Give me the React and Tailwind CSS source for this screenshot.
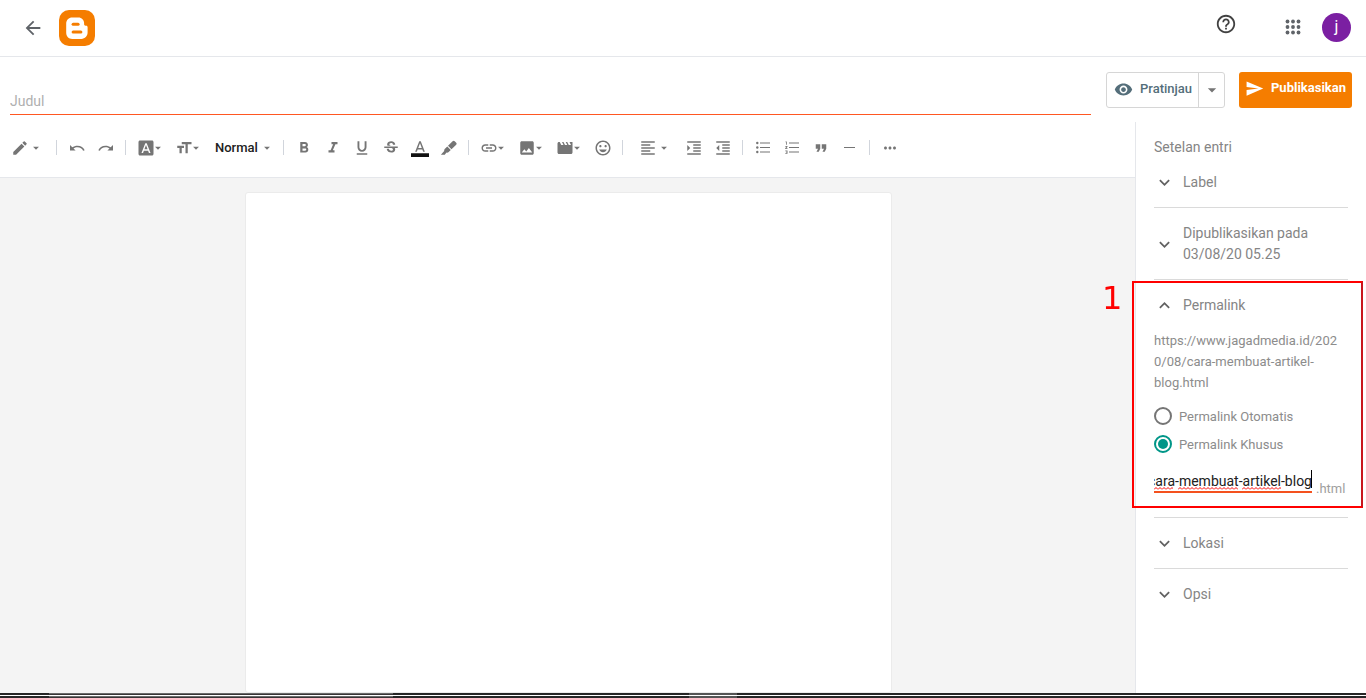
// App.jsx
import React, { useEffect, useRef, useState } from 'react';
import {
  MdArrowBack,
  MdArrowDropDown,
  MdEdit,
  MdExpandLess,
  MdExpandMore,
  MdFontDownload,
  MdFormatAlignLeft,
  MdFormatBold,
  MdFormatIndentDecrease,
  MdFormatIndentIncrease,
  MdFormatItalic,
  MdFormatQuote,
  MdFormatSize,
  MdFormatUnderlined,
  MdHelpOutline,
  MdImage,
  MdLink,
  MdMoreHoriz,
  MdMovie,
  MdOutlineInsertEmoticon,
  MdSend,
  MdStrikethroughS,
  MdVisibility,
} from 'react-icons/md';

const BloggerLogo = () => (
  <svg viewBox="0 0 36 36" className="size-9" aria-hidden="true">
    <rect width="36" height="36" rx="10" fill="#f57d00" />
    <path
      d="M13.200 7.500h6.200c3.300 0 5.700 2.500 5.700 5.600v1c0 1 .6 1.600 1.500 1.600h.6c1 0 1.400.6 1.400 1.500v5.400c0 3.600-2.700 6.300-6.200 6.300h-9.200c-3.500 0-6-2.700-6-6.200V13.500c0-3.400 2.600-6 6-6z"
      fill="#fff"
    />
    <rect x="12.600" y="12.800" width="8" height="3" rx="1.500" fill="#f57d00" />
    <rect x="12.600" y="20.500" width="10.800" height="3" rx="1.500" fill="#f57d00" />
  </svg>
);

const AppsIcon = () => (
  <svg viewBox="0 0 16 16" className="size-4" fill="currentColor" aria-hidden="true">
    {[2.5, 8, 13.5].map((y) => [2.5, 8, 13.5].map((x) => <circle key={`${x}-${y}`} cx={x} cy={y} r="1.900" />))}
  </svg>
);

const UndoIcon = ({ className }) => (
  <svg viewBox="0 0 18 18" className={clsxSize(className)} fill="currentColor" aria-hidden="true">
    <path d="M2 6v5.600h5.600L5.500 9.500C6.600 8.700 8 8.200 9.500 8.200c2.600 0 4.800 1.400 5.600 3.500l1.600-.5C15.700 8.500 12.900 6.700 9.500 6.700c-2 0-3.800.6-5.200 1.600z" />
  </svg>
);

function clsxSize(extra) {
  return extra ? `size-[18px] ${extra}` : 'size-[18px]';
}

const TextColorIcon = () => (
  <svg viewBox="0 0 24 24" className="size-[18px]" fill="currentColor" aria-hidden="true">
    <path d="M11 3L5.500 17h2.250l1.120-3h6.250l1.120 3h2.250L13 3h-2zm-1.380 9L12 5.670 14.380 12H9.620z" />
    <path d="M0 19h24v5H0z" fill="#111" />
  </svg>
);

const MarkerIcon = () => (
  <svg viewBox="0 0 18 18" className="size-[18px]" fill="currentColor" aria-hidden="true">
    <path d="M12.600 2.200a1.500 1.500 0 0 1 2.100 0l1.500 1.500a1.500 1.500 0 0 1 0 2.100l-4.700 4.500-3.500-3.600z" />
    <path d="M7.300 7.400l3.500 3.500-2.400 2.300c-.6.5-1.300.6-2 .3L4.800 15.700H.9l3.300-3.700c-.2-.7 0-1.400.5-1.900z" />
  </svg>
);

const BulletListIcon = () => (
  <svg viewBox="0 0 14 13" className="h-[13px] w-3.5" fill="currentColor" aria-hidden="true">
    <circle cx="1.300" cy="2" r="1.200" />
    <circle cx="1.300" cy="6.500" r="1.200" />
    <circle cx="1.300" cy="11" r="1.200" />
    <path d="M4 1.500h10v1H4zM4 6h10v1H4zM4 10.500h10v1H4z" />
  </svg>
);

const NumberListIcon = () => (
  <svg viewBox="0 0 14 13" className="h-[13px] w-3.5" fill="currentColor" aria-hidden="true">
    <path d="M4 1.500h10v1H4zM4 6h10v1H4zM4 10.500h10v1H4z" />
    <path d="M.5.5h1.300v3.200H1V1.300H.5zM.3 5h2.200v.8L1.300 7.300h1.200v.8H.2v-.8L1.400 5.800H.3zM.3 9.400h2.200v3.300H.3v-.8h1.400v-.4H.9v-.8h.8v-.5H.3z" />
  </svg>
);

const RuleIcon = () => (
  <svg viewBox="0 0 11 1" className="h-px w-[11px]" fill="currentColor" aria-hidden="true">
    <path d="M0 0h11v1H0z" />
  </svg>
);

const Tool = ({ label, children }) => (
  <button type="button" aria-label={label} className="grid h-8 w-[29px] shrink-0 place-items-center">
    {children}
  </button>
);

const DropTool = ({ label, children }) => (
  <button type="button" aria-label={label} className="flex h-8 w-[38px] shrink-0 items-center pl-1.5">
    {children}
    <MdArrowDropDown size={14} className="-ml-1 shrink-0" />
  </button>
);

const WideDropTool = ({ label, children }) => (
  <button type="button" aria-label={label} className="flex h-8 w-[51px] shrink-0 items-center pl-[11px]">
    {children}
    <MdArrowDropDown size={14} className="shrink-0" />
  </button>
);

const Separator = () => <span className="mx-[5px] h-[15px] w-px shrink-0 bg-gray-300" />;

const SectionButton = ({ open, onClick, children }) => (
  <button type="button" aria-expanded={open} onClick={onClick} className="flex w-full items-center gap-2 text-left">
    <span className="grid w-[21px] shrink-0 place-items-center text-[#616161]">
      {open ? <MdExpandLess size={21} /> : <MdExpandMore size={21} />}
    </span>
    <span>{children}</span>
  </button>
);

function Toolbar() {
  return (
    <div className="flex h-14 items-center overflow-hidden border-b border-gray-200 bg-white pb-1 text-[#757575]">
      <WideDropTool label="Tampilan"><MdEdit size={18} /></WideDropTool>
      <Separator />
      <Tool label="Urungkan"><UndoIcon /></Tool>
      <Tool label="Ulangi"><UndoIcon className="-scale-x-100" /></Tool>
      <Separator />
      <DropTool label="Jenis font"><MdFontDownload size={18} /></DropTool>
      <DropTool label="Ukuran font"><MdFormatSize size={18} /></DropTool>
      <button
        type="button"
        className="flex h-8 w-[71px] shrink-0 items-center justify-between pr-1 pl-2 text-[13px] font-medium"
      >
        <span className="text-[#212121]">Normal</span>
        <MdArrowDropDown size={14} />
      </button>
      <Separator />
      <Tool label="Tebal"><MdFormatBold size={18} /></Tool>
      <Tool label="Miring"><MdFormatItalic size={18} /></Tool>
      <Tool label="Garis bawah"><MdFormatUnderlined size={18} /></Tool>
      <Tool label="Coret"><MdStrikethroughS size={18} /></Tool>
      <Tool label="Warna teks"><TextColorIcon /></Tool>
      <Tool label="Warna sorotan"><MarkerIcon /></Tool>
      <Separator />
      <DropTool label="Link"><MdLink size={18} /></DropTool>
      <DropTool label="Gambar"><MdImage size={18} /></DropTool>
      <DropTool label="Video"><MdMovie size={18} /></DropTool>
      <Tool label="Emoji"><MdOutlineInsertEmoticon size={18} /></Tool>
      <Separator />
      <WideDropTool label="Perataan"><MdFormatAlignLeft size={18} /></WideDropTool>
      <Tool label="Tambah indentasi"><MdFormatIndentIncrease size={18} /></Tool>
      <Tool label="Kurangi indentasi"><MdFormatIndentDecrease size={18} /></Tool>
      <Separator />
      <Tool label="Daftar berbutir"><BulletListIcon /></Tool>
      <Tool label="Daftar bernomor"><NumberListIcon /></Tool>
      <Tool label="Kutipan"><MdFormatQuote size={18} /></Tool>
      <Tool label="Garis horizontal"><RuleIcon /></Tool>
      <Separator />
      <Tool label="Lainnya"><MdMoreHoriz size={18} /></Tool>
    </div>
  );
}

// red wavy lines under the words that fail the spell check
const SpellMarks = () => (
  <svg className="pointer-events-none absolute bottom-[3px] left-0 h-[3px] w-full" aria-hidden="true">
    <defs>
      <pattern id="wave" width="4" height="3" patternUnits="userSpaceOnUse">
        <path d="M0 2.500L2 .5l2 2" fill="none" stroke="#f00" strokeWidth="1" />
      </pattern>
    </defs>
    <rect x="0" width="19" height="3" fill="url(#wave)" />
    <rect x="24" width="60" height="3" fill="url(#wave)" />
    <rect x="88" width="39" height="3" fill="url(#wave)" />
  </svg>
);

function PermalinkFields() {
  const [mode, setMode] = useState('khusus');
  const [slug, setSlug] = useState('cara-membuat-artikel-blog');
  const slugRef = useRef(null);

  useEffect(() => {
    // keep the end of the slug in view
    const el = slugRef.current;
    el.focus();
    el.setSelectionRange(el.value.length, el.value.length);
    el.scrollLeft = el.scrollWidth;
  }, []);

  const radioClass =
    'size-[18px] shrink-0 appearance-none rounded-full border-2 border-[#757575] bg-clip-content p-0.5 checked:border-[#009688] checked:bg-[#009688]';

  return (
    <div className="text-[13px] leading-[21px] text-[#8c8c8c]">
      <p className="mt-[14px] pr-2 break-all">
        https://www.jagadmedia.id/2020/08/cara-membuat-artikel-
        <span className="inline-block">blog.html</span>
      </p>
      <div className="mt-[9px]">
        <label className="flex h-7 items-center gap-[7px]">
          <input
            type="radio"
            name="permalink"
            className={radioClass}
            checked={mode === 'otomatis'}
            onChange={() => setMode('otomatis')}
          />
          Permalink Otomatis
        </label>
        <label className="flex h-7 items-center gap-[7px]">
          <input
            type="radio"
            name="permalink"
            className={radioClass}
            checked={mode === 'khusus'}
            onChange={() => setMode('khusus')}
          />
          Permalink Khusus
        </label>
      </div>
      <div className="mt-3 mb-1 flex items-start gap-1">
        <div className="relative min-w-0 flex-1">
          <input
            ref={slugRef}
            aria-label="Permalink khusus"
            spellCheck={false}
            value={slug}
            onChange={(e) => setSlug(e.target.value)}
            className="block h-[23px] w-full border-b-2 border-[#f4511e] text-[14px] text-[#212121] caret-transparent outline-none"
          />
          <SpellMarks />
          <span className="absolute top-0 right-0 h-[18px] w-px bg-black" />
        </div>
        <span className="mt-2 w-8 shrink-0 text-[#9e9e9e]">.html</span>
      </div>
    </div>
  );
}

function SettingsPanel() {
  const [open, setOpen] = useState(true);

  return (
    <aside className="w-[231px] shrink-0 border-l border-gray-200 bg-white px-[18px] pt-[15px] text-[14px] leading-[21px] text-[#858585]">
      <h2>Setelan entri</h2>
      <div className="py-[14px]">
        <SectionButton>Label</SectionButton>
      </div>
      <div className="border-t border-[#dadada] pt-[15px] pb-[14px]">
        <SectionButton>
          Dipublikasikan pada
          <br />
          03/08/20 05.25
        </SectionButton>
      </div>
      <div className="relative border-t border-[#dadada] pt-[15px] pb-[14px]">
        <SectionButton open={open} onClick={() => setOpen(!open)}>Permalink</SectionButton>
        {open && <PermalinkFields />}
        {/* callout */}
        <div className="pointer-events-none absolute top-px -right-[15px] bottom-[9px] -left-[22px] border-2 border-[#f00] border-r-[#c8141c]" />
        <span className="absolute top-0 -left-[52px] font-['DejaVu_Sans',sans-serif] text-[32px] leading-9 text-[#f00]">
          1
        </span>
      </div>
      <div className="border-t border-[#dadada] pt-[15px] pb-[14px]">
        <SectionButton>Lokasi</SectionButton>
      </div>
      <div className="border-t border-[#dadada] pt-[15px] pb-[14px]">
        <SectionButton>Opsi</SectionButton>
      </div>
    </aside>
  );
}

const TaskbarStrip = () => (
  <div className="flex h-0.5 bg-[#262626]">
    <span className="ml-[49px] w-[344px] border-t border-[#6b6b6b] bg-[#383536]" />
    <span className="ml-[296px] w-12 bg-[#555]" />
  </div>
);

export default function App() {
  const [title, setTitle] = useState('');

  return (
    <div className="flex min-h-screen flex-col bg-white font-[Roboto,sans-serif]">
      <header className="flex h-[57px] items-center justify-between border-b border-gray-200 pr-[15px] pl-[22px]">
        <div className="flex items-center gap-[15px]">
          <button type="button" aria-label="Kembali" className="text-[#5f6368]">
            <MdArrowBack size={22} />
          </button>
          <a href="#" aria-label="Blogger">
            <BloggerLogo />
          </a>
        </div>
        <div className="flex h-[54px] items-center self-start">
          <button type="button" aria-label="Bantuan" className="h-12 self-start text-[#424242]">
            <MdHelpOutline size={22} />
          </button>
          <button type="button" aria-label="Aplikasi Google" className="ml-12 text-[#5f6368]">
            <AppsIcon />
          </button>
          <button
            type="button"
            aria-label="Akun"
            className="ml-[21px] size-[29px] rounded-full bg-[#7b1fa2] text-[16px] leading-7 text-white"
          >
            j
          </button>
        </div>
      </header>

      <div className="flex h-[65px] items-start pt-[15px] pr-[14px] pb-[7px] pl-[10px]">
        <input
          aria-label="Judul"
          placeholder="Judul"
          value={title}
          onChange={(e) => setTitle(e.target.value)}
          className="mr-[15px] h-7 min-w-0 flex-1 self-end border-b border-[#ff5722] text-[14px] outline-none placeholder:text-[#b0b0b0]"
        />
        <div className="mr-[14px] flex h-9 w-[119px] rounded-[3px] border border-[#d6d6d6] text-[#546e7a]">
          <button type="button" className="flex flex-1 items-center gap-[7px] pb-[2px] pl-[7px] text-[13px] font-medium">
            <MdVisibility size={19} />
            Pratinjau
          </button>
          <button
            type="button"
            aria-label="Opsi pratinjau"
            className="grid w-[26px] place-items-center border-l border-[#d6d6d6] text-[#757575]"
          >
            <MdArrowDropDown size={20} />
          </button>
        </div>
        <button
          type="button"
          className="flex h-9 w-[113px] items-center justify-center gap-[7px] rounded-[3px] bg-[#f57d00] pb-1 text-[13px] font-bold text-white"
        >
          <MdSend size={19} />
          Publikasikan
        </button>
      </div>

      <div className="flex flex-1">
        <main className="flex min-w-0 flex-1 flex-col bg-[#f4f4f4]">
          <Toolbar />
          <div className="flex flex-1 pt-[14px] pl-0.5">
            <div
              contentEditable
              suppressContentEditableWarning
              role="textbox"
              aria-label="Isi entri"
              className="mx-auto w-full max-w-[647px] rounded-[3px] border border-[#ebebeb] bg-white outline-none"
            />
          </div>
        </main>
        <SettingsPanel />
      </div>

      <footer className="flex flex-col gap-px">
        <TaskbarStrip />
        <TaskbarStrip />
      </footer>
    </div>
  );
}
